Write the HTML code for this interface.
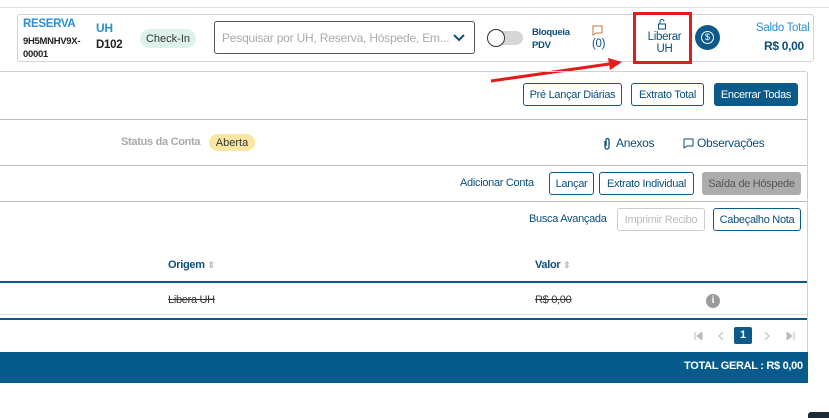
<!DOCTYPE html><html><head><style>
*{box-sizing:border-box;margin:0;padding:0}
body{width:829px;height:418px;overflow:hidden;background:#fff;font-family:"Liberation Sans",sans-serif;position:relative;color:#333}
.a{position:absolute}
.btn{position:absolute;border:1px solid #0b5a8a;border-radius:3px;color:#0b4f7c;font-size:11px;display:flex;align-items:center;justify-content:center;background:#fff;letter-spacing:-0.3px;white-space:nowrap}
.lbl{position:absolute;font-size:11px;letter-spacing:-0.3px;white-space:nowrap}
</style></head><body>
<div class="a" style="left:0;top:7px;width:829px;height:1px;background:#e2e2e2"></div>
<div class="a" style="left:17px;top:14px;width:797px;height:48px;border:1px solid #d3d3d3;border-radius:3px"></div>
<div class="lbl" style="left:23px;top:18px;color:#2b8fd6;font-size:11.5px;font-weight:bold">RESERVA</div>
<div class="lbl" style="left:23px;top:35px;color:#222;font-size:9.5px;font-weight:bold;line-height:13px">9H5MNHV9X-<br>00001</div>
<div class="lbl" style="left:96px;top:21px;color:#2b8fd6;font-size:12px;font-weight:bold">UH</div>
<div class="lbl" style="left:96px;top:39px;color:#222;font-size:11.5px;font-weight:bold">D102</div>
<div class="a" style="left:140px;top:29px;width:56px;height:19px;border-radius:10px;background:#ddf3ea;color:#333;font-size:11px;display:flex;align-items:center;justify-content:center">Check-In</div>
<div class="a" style="left:214px;top:21px;width:261px;height:33px;border:1px solid #555;border-radius:3px;font-size:12px;color:#aaa;padding:9px 0 0 7px;white-space:nowrap;overflow:hidden;letter-spacing:-0.2px">Pesquisar por UH, Reserva, Hóspede, Em...</div>
<div class="a" style="left:449px;top:23px;width:24px;height:29px;background:#fff"></div>
<svg class="a" style="left:453px;top:34px" width="12" height="8"><path d="M1 1l5 5 5-5" stroke="#0b4f7c" stroke-width="2" fill="none"/></svg>
<div class="a" style="left:487px;top:31px;width:36px;height:14px;border-radius:7px;background:#d6d6d6"></div>
<div class="a" style="left:487px;top:29px;width:18px;height:18px;border-radius:50%;background:#fff;border:1.5px solid #333"></div>
<div class="lbl" style="left:532px;top:26px;color:#0b4f7c;font-size:9.5px;font-weight:bold;line-height:13px">Bloqueia<br>PDV</div>
<svg class="a" style="left:592px;top:25px" width="11" height="11"><path d="M1 1h9v7H4l-3 2z" stroke="#c8763a" fill="none"/></svg>
<div class="lbl" style="left:592px;top:38px;color:#0b4f7c;font-size:11.5px">(0)</div>
<div class="a" style="left:633px;top:12px;width:59px;height:52px;border:3px solid #e31b1b"></div>
<svg class="a" style="left:657px;top:19px" width="10" height="11"><path d="M3 5V2.5a2 2 0 0 1 4 0" stroke="#0b4f7c" fill="none"/><rect x="1.5" y="5" width="7" height="5" stroke="#0b4f7c" fill="none"/></svg>
<div class="lbl" style="left:640px;top:31px;width:49px;text-align:center;color:#0b4f7c;font-size:11.5px;line-height:12px">Liberar<br>UH</div>
<div class="a" style="left:695px;top:25px;width:25px;height:25px;border-radius:50%;background:#0b5a8a"></div>
<div class="a" style="left:701px;top:31px;width:13px;height:13px;border-radius:50%;border:1.5px solid #fff;color:#fff;font-size:9px;line-height:10px;text-align:center">$</div>
<div class="lbl" style="left:756px;top:22px;color:#2b8fd6;font-size:11.5px">Saldo Total</div>
<div class="lbl" style="left:764px;top:39px;color:#0b4f7c;font-size:12px;font-weight:bold">R$ 0,00</div>
<svg class="a" style="left:488px;top:55px" width="150" height="30"><path d="M3 26L128 8" stroke="#e31b1b" stroke-width="3"/><path d="M120 3l14 4-12 8z" fill="#e31b1b"/></svg>
<div class="a" style="left:-2px;top:71px;width:810px;height:312px;border:1px solid #cfcfcf;border-radius:3px"></div>
<div class="btn" style="left:523px;top:83px;width:99px;height:23px">Pré Lançar Diárias</div>
<div class="btn" style="left:631px;top:83px;width:73px;height:23px">Extrato Total</div>
<div class="btn" style="left:714px;top:83px;width:84px;height:23px;background:#0b5a8a;color:#fff">Encerrar Todas</div>
<div class="a" style="left:0;top:119px;width:807px;height:1px;background:#bbb"></div>
<div class="lbl" style="left:121px;top:136px;color:#aaa;font-weight:bold">Status da Conta</div>
<div class="a" style="left:209px;top:134px;width:46px;height:17px;border-radius:9px;background:#fbe7a1;font-size:11px;display:flex;align-items:center;justify-content:center">Aberta</div>
<svg class="a" style="left:603px;top:137px" width="8" height="13"><path d="M2 4v6a2 2 0 0 0 4 0V3a1.5 1.5 0 0 0-3 0v6" stroke="#0b4f7c" stroke-width="1.3" fill="none"/></svg>
<div class="lbl" style="left:616px;top:136px;color:#0b4f7c;font-size:12px">Anexos</div>
<svg class="a" style="left:683px;top:138px" width="11" height="11"><path d="M1 1h9v7H4l-3 2z" stroke="#0b4f7c" fill="none"/></svg>
<div class="lbl" style="left:697px;top:136px;color:#0b4f7c;font-size:12px">Observações</div>
<div class="a" style="left:0;top:165px;width:807px;height:1px;background:#bbb"></div>
<div class="lbl" style="left:460px;top:177px;color:#0b4f7c">Adicionar Conta</div>
<div class="btn" style="left:549px;top:172px;width:45px;height:23px">Lançar</div>
<div class="btn" style="left:599px;top:172px;width:95px;height:23px">Extrato Individual</div>
<div class="a" style="left:702px;top:172px;width:99px;height:23px;background:#acacac;color:#555;font-size:11px;border-radius:3px;display:flex;align-items:center;justify-content:center;letter-spacing:-0.3px">Saída de Hóspede</div>
<div class="a" style="left:0;top:201px;width:807px;height:1px;background:#bbb"></div>
<div class="lbl" style="left:529px;top:213px;color:#0b4f7c">Busca Avançada</div>
<div class="btn" style="left:617px;top:208px;width:88px;height:23px;border-color:#ccc;color:#bbb">Imprimir Recibo</div>
<div class="btn" style="left:713px;top:208px;width:88px;height:23px">Cabeçalho Nota</div>
<div class="lbl" style="left:168px;top:259px;color:#0b4f7c;font-weight:bold">Origem <span style="color:#bbb;font-size:9px">⇕</span></div>
<div class="lbl" style="left:535px;top:259px;color:#0b4f7c;font-weight:bold">Valor <span style="color:#bbb;font-size:9px">⇕</span></div>
<div class="a" style="left:0;top:281px;width:807px;height:2px;background:#0b5a8a"></div>
<div class="lbl" style="left:168px;top:294px;color:#333;text-decoration:line-through">Libera UH</div>
<div class="lbl" style="left:535px;top:294px;color:#333;text-decoration:line-through">R$ 0,00</div>
<div class="a" style="left:706px;top:294px;width:14px;height:14px;border-radius:50%;background:#9a9a9a;color:#fff;font-size:10px;font-weight:bold;text-align:center;line-height:14px">i</div>
<div class="a" style="left:0;top:314px;width:807px;height:1px;background:#ddd"></div>
<div class="a" style="left:0;top:318px;width:807px;height:2px;background:#0b5a8a"></div>
<svg class="a" style="left:694px;top:332px" width="10" height="8"><path d="M1 0v8M8 0L3 4l5 4z" stroke="#bbb" fill="#bbb"/></svg>
<svg class="a" style="left:718px;top:332px" width="6" height="8"><path d="M5 0L1 4l4 4" stroke="#bbb" fill="none"/></svg>
<div class="a" style="left:734px;top:327px;width:18px;height:17px;background:#0b5a8a;color:#fff;font-size:11px;font-weight:bold;text-align:center;line-height:17px;border-radius:2px">1</div>
<svg class="a" style="left:764px;top:332px" width="6" height="8"><path d="M1 0l4 4-4 4" stroke="#bbb" fill="none"/></svg>
<svg class="a" style="left:785px;top:332px" width="10" height="8"><path d="M9 0v8M2 0l5 4-5 4z" stroke="#bbb" fill="#bbb"/></svg>
<div class="a" style="left:0;top:352px;width:808px;height:31px;background:#065a8c"></div>
<div class="lbl" style="left:684px;top:360px;color:#fff;font-weight:bold;font-size:11px">TOTAL GERAL : R$ 0,00</div>
<div class="a" style="left:808px;top:412px;width:21px;height:6px;background:#1e2b38;border-radius:3px 0 0 0"></div>
</body></html>
